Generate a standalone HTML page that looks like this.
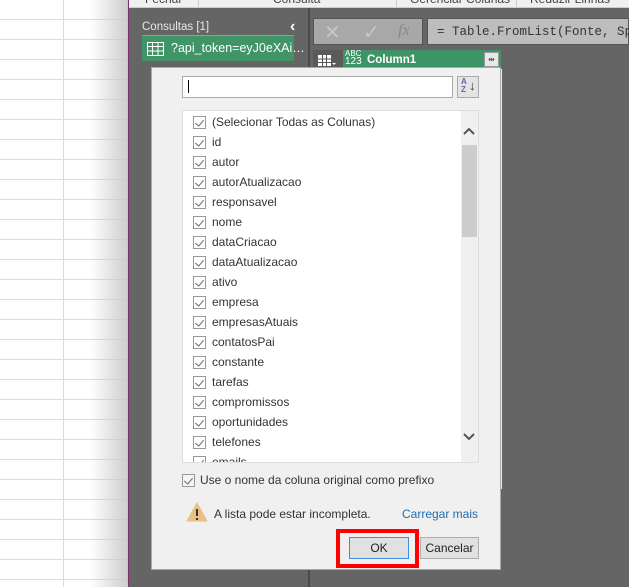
<!DOCTYPE html>
<html><head><meta charset="utf-8"><style>
*{margin:0;padding:0;box-sizing:border-box}
body{width:629px;height:587px;overflow:hidden;position:relative;background:#656565;font-family:"Liberation Sans",sans-serif;font-size:12px;color:#222}
.abs{position:absolute}
#sheet{left:0;top:0;width:128px;height:587px;background:#fff;
background-image:linear-gradient(#dcdcdc 1px,transparent 1px),linear-gradient(90deg,#dcdcdc 1px,transparent 1px);
background-size:100% 20px,64px 100%;background-position:0 19px,63px 0}
#shadow{left:90px;top:0;width:38px;height:587px;background:linear-gradient(90deg,rgba(255,255,255,0),rgba(200,200,200,.9))}
#purple{left:128px;top:0;width:1px;height:587px;background:#7a2f6e}
.item{position:absolute;left:193px;height:20px;line-height:20px}
.cb{position:absolute;left:0;top:4px;width:13px;height:13px;border:1px solid #999;background:#fff}
.cb:after{content:"";position:absolute;left:3px;top:1px;width:4px;height:7px;border:solid #666;border-width:0 1.5px 1.5px 0;transform:rotate(40deg)}
.item span{position:absolute;left:19px;white-space:nowrap;color:#333}
</style></head><body>
<div class="abs" id="sheet"></div>
<div class="abs" id="shadow"></div>
<div class="abs" id="purple"></div>
<div class="abs" style="left:129px;top:0;width:500px;height:8px;background:#f0f0f0;border-bottom:1px solid #ccc"></div>
<div class="abs" style="left:145px;top:-8px;color:#444;font-size:12px">Fechar</div>
<div class="abs" style="left:198px;top:0;width:1px;height:7px;background:#ccc"></div>
<div class="abs" style="left:273px;top:-8px;color:#444">Consulta</div>
<div class="abs" style="left:396px;top:0;width:1px;height:7px;background:#ccc"></div>
<div class="abs" style="left:410px;top:-8px;color:#444">Gerenciar Colunas</div>
<div class="abs" style="left:516px;top:0;width:1px;height:7px;background:#ccc"></div>
<div class="abs" style="left:530px;top:-8px;color:#444">Reduzir Linhas</div>
<div class="abs" style="left:308px;top:8px;width:2px;height:579px;background:#4a4a4a"></div>
<div class="abs" style="left:142px;top:21px;color:#e8e8e8;font-size:11.5px">Consultas [1]</div>
<div class="abs" style="left:290px;top:18px;color:#fff;font-size:16px;font-weight:bold">&#8249;</div>
<div class="abs" style="left:142px;top:35px;width:152px;height:1px;background:#999"></div>
<div class="abs" style="left:142px;top:36px;width:152px;height:25px;background:#419466"></div>
<svg class="abs" style="left:147px;top:42px" width="17" height="14"><rect x=".5" y=".5" width="16" height="13" fill="none" stroke="#fff"/><path d="M0 4.5H17M0 9H17M5.5 0V14M11 0V14" stroke="#fff"/></svg>
<div class="abs" style="left:171px;top:41px;color:#fff;font-size:12.5px">?api_token=eyJ0eXAi…</div>
<div class="abs" style="left:313px;top:18px;width:110px;height:27px;background:#a8a8a8;border:1px solid #555"></div>
<div class="abs" style="left:324px;top:20px;color:#c6c6c6;font-size:20px">✕</div>
<div class="abs" style="left:363px;top:20px;color:#c6c6c6;font-size:20px">✓</div>
<div class="abs" style="left:398px;top:22px;color:#888;font-size:16px;font-style:italic;font-family:'Liberation Serif',serif">fx</div>
<div class="abs" style="left:427px;top:18px;width:202px;height:27px;background:#bdbdbd;border:1px solid #555"></div>
<div class="abs" style="left:437px;top:25px;font-family:'Liberation Mono',monospace;font-size:12.5px;color:#333;white-space:nowrap">= Table.FromList(Fonte, Split</div>
<div class="abs" style="left:313px;top:50px;width:30px;height:19px;background:#5a5a5a"></div>
<svg class="abs" style="left:318px;top:55px" width="20" height="12"><rect x=".5" y=".5" width="12" height="10" fill="#fff" stroke="#fff"/><path d="M0 4H13M0 7.5H13M4.5 0V11M8.5 0V11" stroke="#555"/><path d="M14 8h4l-2 2z" fill="#fff"/></svg>
<div class="abs" style="left:343px;top:50px;width:158px;height:19px;background:#3f9467"></div>
<div class="abs" style="left:345px;top:50px;color:#fff;font-size:8px;line-height:8px">ABC<br><span style="font-size:10px">123</span></div>
<div class="abs" style="left:367px;top:54px;color:#fff;font-weight:bold;font-size:11.5px">Column1</div>
<div class="abs" style="left:484px;top:52px;width:15px;height:15px;background:#e8e8e8;border:1px solid #999;font-size:8px;text-align:center;line-height:13px;color:#444">⇹</div>
<div class="abs" style="left:500px;top:69px;width:2px;height:420px;background:#e0ece5"></div>
<!-- dialog -->
<div class="abs" style="left:151px;top:67px;width:350px;height:503px;background:#f0f0f0;border:1px solid #aaa"></div>
<div class="abs" style="left:182px;top:76px;width:271px;height:22px;background:#fff;border:1px solid #aaa"></div>
<div class="abs" style="left:188px;top:80px;width:1px;height:13px;background:#000"></div>
<div class="abs" style="left:457px;top:76px;width:22px;height:22px;background:#e4e4e4;border:1px solid #aaa"></div>
<div class="abs" style="left:461px;top:78px;font-size:8px;line-height:8px;color:#7a5aa8;font-weight:bold">A<br>Z</div>
<div class="abs" style="left:469px;top:78px;font-size:13px;color:#333">↓</div>
<div class="abs" style="left:182px;top:110px;width:297px;height:353px;background:#fff;border:1px solid #ddd;overflow:hidden">
</div>
<div class="abs" style="left:461px;top:111px;width:17px;height:351px;background:#f0f0f0"></div>
<div class="abs" style="left:462px;top:145px;width:15px;height:92px;background:#cdcdcd"></div>
<svg class="abs" style="left:463px;top:127px" width="12" height="8"><path d="M1 7L6 2L11 7" fill="none" stroke="#555" stroke-width="2"/></svg>
<svg class="abs" style="left:463px;top:433px" width="12" height="8"><path d="M1 1L6 6L11 1" fill="none" stroke="#555" stroke-width="2"/></svg>
<div class="abs" style="left:183px;top:111px;width:278px;height:351px;overflow:hidden">
<div style="position:relative;left:-183px;top:-111px">
<div class="item" style="top:112px"><div class="cb"></div><span>(Selecionar Todas as Colunas)</span></div>
<div class="item" style="top:132px"><div class="cb"></div><span>id</span></div>
<div class="item" style="top:152px"><div class="cb"></div><span>autor</span></div>
<div class="item" style="top:172px"><div class="cb"></div><span>autorAtualizacao</span></div>
<div class="item" style="top:192px"><div class="cb"></div><span>responsavel</span></div>
<div class="item" style="top:212px"><div class="cb"></div><span>nome</span></div>
<div class="item" style="top:232px"><div class="cb"></div><span>dataCriacao</span></div>
<div class="item" style="top:252px"><div class="cb"></div><span>dataAtualizacao</span></div>
<div class="item" style="top:272px"><div class="cb"></div><span>ativo</span></div>
<div class="item" style="top:292px"><div class="cb"></div><span>empresa</span></div>
<div class="item" style="top:312px"><div class="cb"></div><span>empresasAtuais</span></div>
<div class="item" style="top:332px"><div class="cb"></div><span>contatosPai</span></div>
<div class="item" style="top:352px"><div class="cb"></div><span>constante</span></div>
<div class="item" style="top:372px"><div class="cb"></div><span>tarefas</span></div>
<div class="item" style="top:392px"><div class="cb"></div><span>compromissos</span></div>
<div class="item" style="top:412px"><div class="cb"></div><span>oportunidades</span></div>
<div class="item" style="top:432px"><div class="cb"></div><span>telefones</span></div>
<div class="item" style="top:452px"><div class="cb"></div><span>emails</span></div>
</div></div>
<div class="item" style="left:182px;top:470px"><div class="cb" style="background:#f4f4f4"></div><span style="left:18px">Use o nome da coluna original como prefixo</span></div>
<svg class="abs" style="left:186px;top:502px" width="22" height="20"><path d="M11 1L21 19H1Z" fill="#e8c083" stroke="#e8c083" stroke-linejoin="round"/><path d="M11 7V14M11 16V18" stroke="#333" stroke-width="2"/></svg>
<div class="abs" style="left:214px;top:507px;color:#333">A lista pode estar incompleta.</div>
<div class="abs" style="left:402px;top:507px;color:#1e6eb4">Carregar mais</div>
<div class="abs" style="left:336px;top:529px;width:83px;height:39px;border:4px solid #f00"></div>
<div class="abs" style="left:349px;top:537px;width:60px;height:22px;background:#e1e1e1;border:1px solid #3c8fe0;text-align:center;line-height:20px">OK</div>
<div class="abs" style="left:420px;top:537px;width:59px;height:22px;background:#e1e1e1;border:1px solid #adadad;text-align:center;line-height:20px">Cancelar</div>
</body></html>
